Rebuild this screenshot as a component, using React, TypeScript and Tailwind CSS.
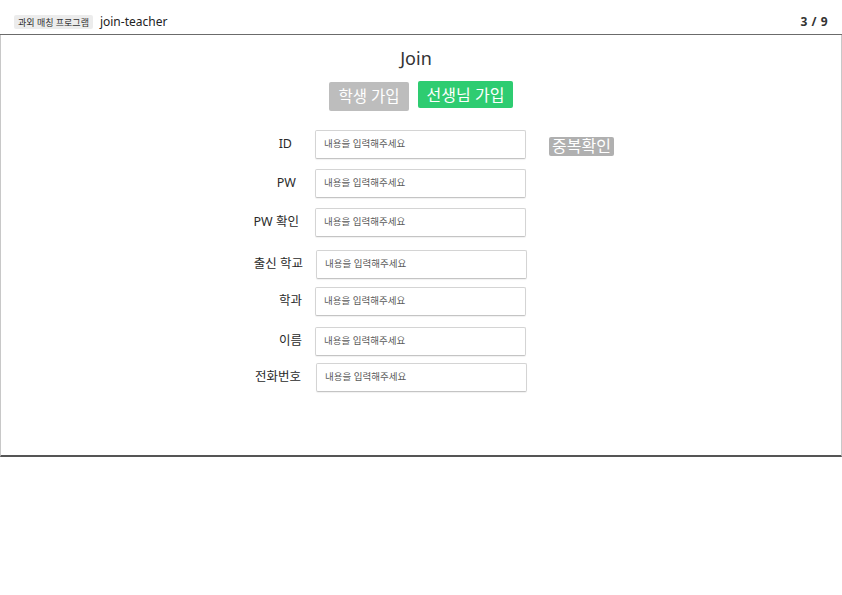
import React from "react";

const rows = [
  { label: "ID", pr: "pr-[14px]", ml: "ml-[10px]", mt: "mt-0", dup: true },
  { label: "PW", pr: "pr-[10px]", ml: "ml-[10px]", mt: "mt-[10px]", dup: false },
  { label: "PW 확인", pr: "pr-[7px]", ml: "ml-[10px]", mt: "mt-[10px]", dup: false },
  { label: "출신 학교", pr: "pr-[3px]", ml: "ml-[11px]", mt: "mt-[13px]", dup: false },
  { label: "학과", pr: "pr-[4px]", ml: "ml-[10px]", mt: "mt-[8px]", dup: false },
  { label: "이름", pr: "pr-[4px]", ml: "ml-[10px]", mt: "mt-[11px]", dup: false },
  { label: "전화번호", pr: "pr-[5px]", ml: "ml-[11px]", mt: "mt-[7px]", dup: false },
];

export default function App() {
  return (
    <div
      className="w-[842px] h-[595px] bg-white text-[#222]"
      style={{ fontFamily: '"Noto Sans", "Noto Sans CJK KR", sans-serif' }}
    >
      <div className="h-[35px] border-b-[1.5px] border-[#6b6b6b] flex items-center pt-[10px] pl-[14px] pr-[14px]">
        <span className="bg-[#ececec] rounded-[2px] px-[4px] h-[14px] flex items-center text-[9px] leading-none text-[#333]">
          과외 매칭 프로그램
        </span>
        <span className="ml-[7px] text-[12px] leading-none text-[#222]">join-teacher</span>
        <span className="ml-auto text-[12px] font-bold leading-none text-[#333] tracking-[0.5px]">3 / 9</span>
      </div>
      <div className="h-[422px] border-l border-r border-[#c8c8c8] border-b-2 border-b-[#555] flex flex-col items-center">
        <div className="mt-[12px] mr-[10px] text-[18px] leading-[22px] text-[#333]">Join</div>
        <div className="mt-[12px] flex items-start gap-[9px]">
          <div className="mt-[1px] w-[80px] h-[29px] rounded-[2px] bg-[#bdbdbd] text-white text-[15.5px] flex items-center justify-center">
            학생 가입
          </div>
          <div className="w-[95px] h-[27px] rounded-[2px] bg-[#2ecc71] text-white text-[16px] flex items-center justify-center">
            선생님 가입
          </div>
        </div>
        <div className="mt-[19px] w-full flex flex-col">
          {rows.map((r) => (
            <div key={r.label} className={`flex items-center h-[29px] ${r.mt}`}>
              <div className={`w-[305px] text-right text-[12.5px] text-[#2a2a2a] ${r.pr}`}>{r.label}</div>
              <div
                className={`${r.ml} -translate-x-px w-[211px] h-[29px] border border-[#d4d4d4] border-b-[#c4c4c4] rounded-[2px] shadow-[0_1px_1px_rgba(0,0,0,0.06)] flex items-center pl-[8px] text-[9.5px] text-[#5a5a5a]`}
              >
                내용을 입력해주세요
              </div>
              {r.dup && (
                <div className="ml-[22px] mt-[3px] w-[65px] h-[19px] bg-[#b0b0b0] rounded-[2px] text-white text-[16px] leading-none flex items-center justify-center">
                  중복확인
                </div>
              )}
            </div>
          ))}
        </div>
      </div>
    </div>
  );
}
